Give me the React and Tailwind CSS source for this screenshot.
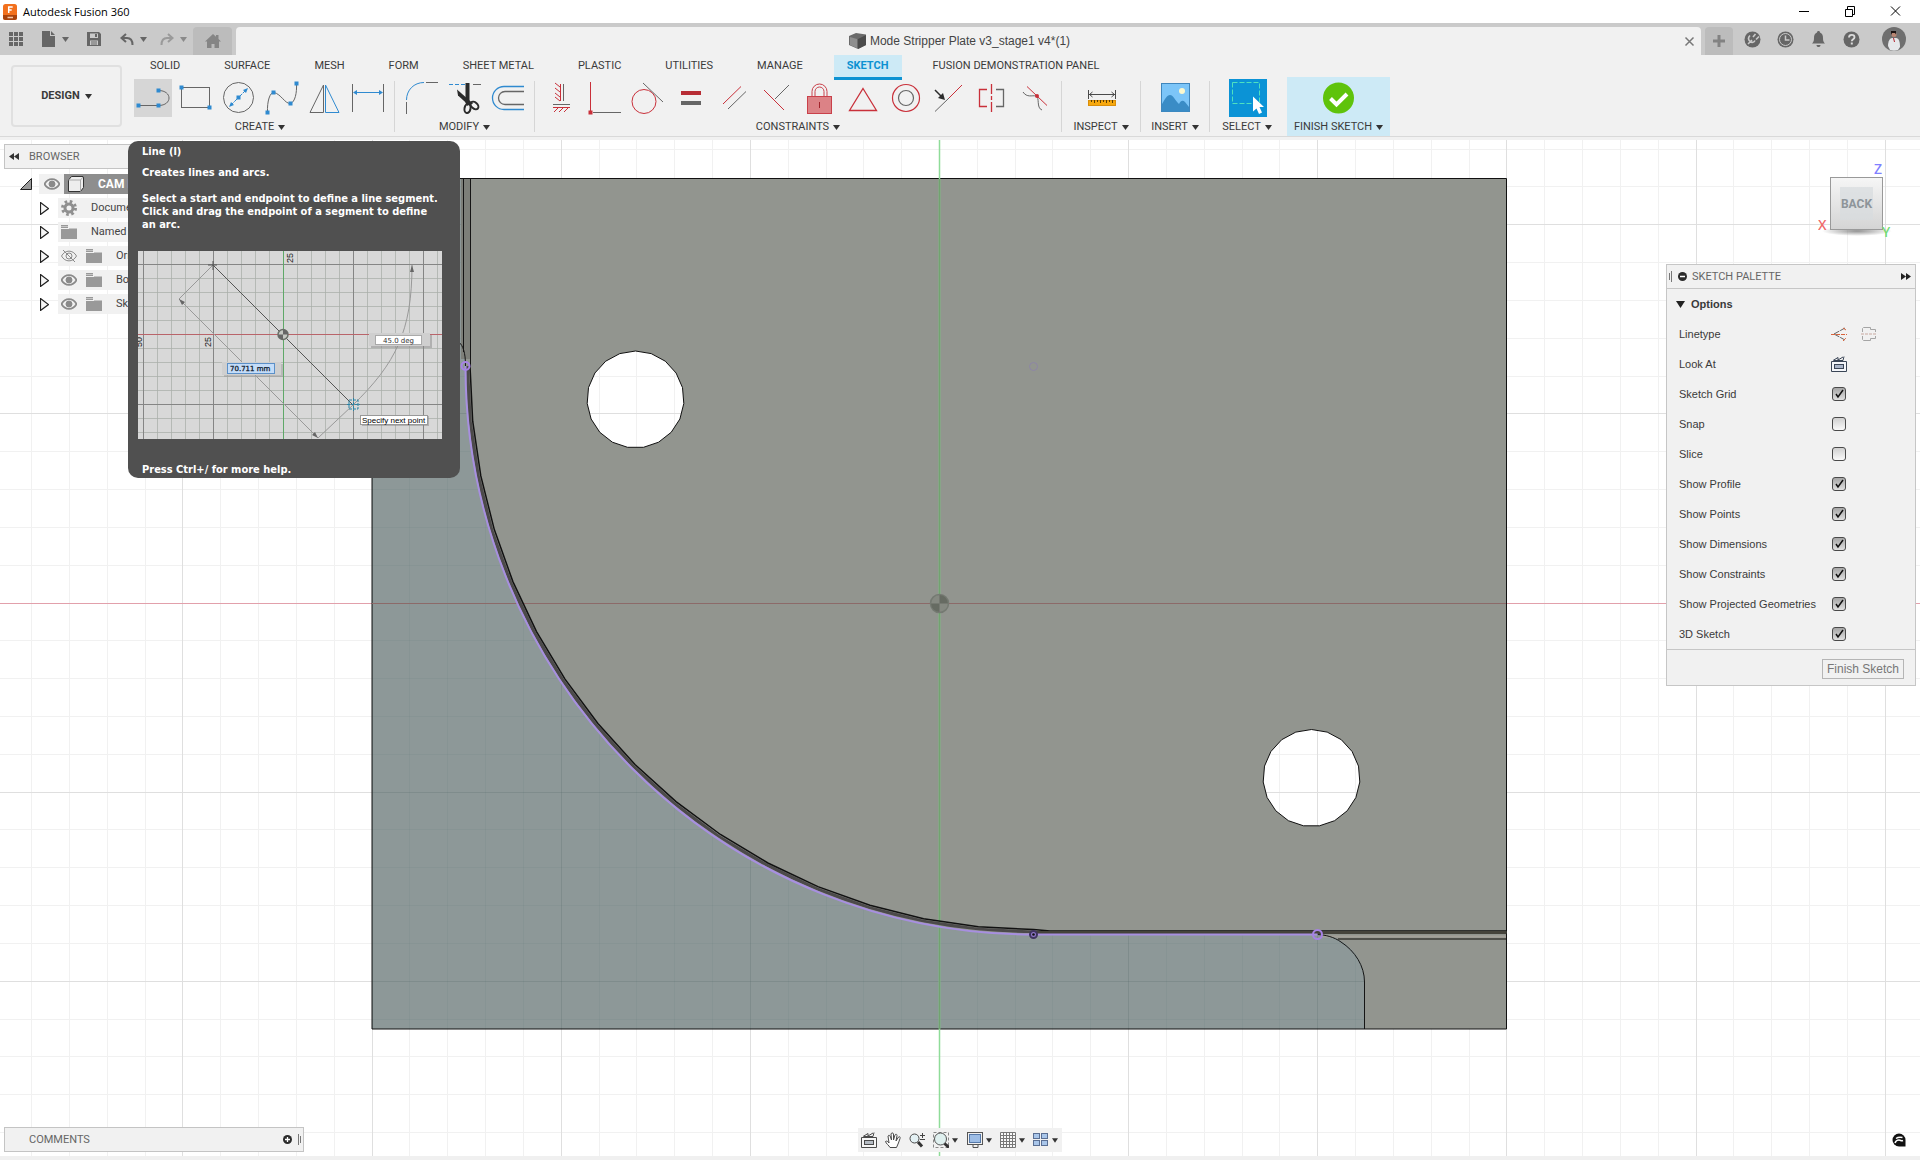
const BLUE = "#2f8ad0";
const GRAY = "#666666";
const RED = "#c9303a";
const STEP = 37.83;
const OX = 939;
const OY = 603.5;

function Caret({ className = "text-[#333]" }) {
  return (
    <svg width="7" height="5" viewBox="0 0 7 5" className={className} aria-hidden="true">
      <path d="M0 0h7L3.5 5z" fill="currentColor" />
    </svg>
  );
}

function Node({ x, y, c = BLUE }) {
  return <rect x={x - 2} y={y - 2} width="4" height="4" fill={c} />;
}

const createTools = [
  {
    name: "Line",
    active: true,
    art: (
      <g>
        <path d="M7.5 26.5H27.5C41.5 26.5 41.5 11.5 27.5 11.5" stroke={GRAY} />
        <Node x={7.5} y={26.5} /><Node x={27.5} y={26.5} /><Node x={27.5} y={11.5} />
      </g>
    ),
  },
  {
    name: "Rectangle",
    art: (
      <g>
        <rect x="7.5" y="8.5" width="28" height="20" stroke={GRAY} />
        <Node x={7.5} y={8.5} /><Node x={35.5} y={28.5} />
      </g>
    ),
  },
  {
    name: "Circle",
    art: (
      <g>
        <circle cx="21.5" cy="18.5" r="15" stroke={GRAY} />
        <path d="M13 27 30 10" stroke={BLUE} strokeDasharray="5 1" />
        <path d="M31 9l-5 2 3 3zM12 28l5-2-3-3z" fill={BLUE} />
        <Node x={21.5} y={18.5} />
      </g>
    ),
  },
  {
    name: "Spline",
    art: (
      <g>
        <path d="M7.5 33.5C7 22 10 13 14 13.5 21 15 25 25 30.5 24.5 35 23 37 14 36.5 4.5" stroke={GRAY} />
        <Node x={7.5} y={33.5} /><Node x={13.5} y={13.5} /><Node x={30.5} y={24.5} /><Node x={36.5} y={4.5} />
      </g>
    ),
  },
  {
    name: "Mirror",
    art: (
      <g>
        <path d="M20.5 6v27.5H7z" stroke={GRAY} />
        <path d="M22.5 6v27.5H36z" stroke={BLUE} />
      </g>
    ),
  },
  {
    name: "Dimension",
    art: (
      <g>
        <path d="M6.5 5v28M37.5 5v28" stroke={GRAY} />
        <path d="M8 13.5h28" stroke={BLUE} />
        <path d="M7 13.5l4-2.5v5zM37 13.5l-4-2.5v5z" fill={BLUE} />
      </g>
    ),
  },
];

const modifyTools = [
  {
    name: "Fillet",
    art: (
      <g>
        <path d="M6.5 21C6.5 11 14 3.5 24 3.5" stroke={BLUE} />
        <path d="M26 3.5H38M6.5 23V35" stroke={GRAY} />
      </g>
    ),
  },
  {
    name: "Trim",
    art: (
      <g>
        <path d="M6 5.5h16" stroke={BLUE} strokeDasharray="4 2" />
        <path d="M30 5.5h8" stroke={GRAY} />
        <path d="M22.5 4h4v20l-2 3-2-3z" fill="#2b2b2b" />
        <path d="M14 10.5l16 14-4 2-11-10z" fill="#2b2b2b" />
        <ellipse cx="24.5" cy="29.5" rx="3" ry="4.5" stroke="#2b2b2b" strokeWidth="2" transform="rotate(10 24.5 29.5)" />
        <ellipse cx="31.5" cy="26.5" rx="3" ry="4.5" stroke="#2b2b2b" strokeWidth="2" transform="rotate(-48 31.5 26.5)" />
      </g>
    ),
  },
  {
    name: "Offset",
    art: (
      <g>
        <path d="M38 7.5H18a11.5 11.5 0 0 0 0 23H38" stroke={BLUE} strokeWidth="1.3" />
        <path d="M38 12.5H19a6.5 6.5 0 0 0 0 13H38" stroke={GRAY} strokeWidth="1.3" />
      </g>
    ),
  },
];

const constraintTools = [
  {
    name: "Horizontal/Vertical",
    art: (
      <g>
        <path d="M20.5 5v17M13 28.5h17M20 8l-5-4M20 13l-5-4M20 18l-5-4M20 22l-5-4M14 33l4-4M19 33l4-4M24 33l4-4" stroke={RED} />
        <path d="M23.5 5v17M13 25.5h17" stroke={GRAY} />
      </g>
    ),
  },
  {
    name: "Coincident",
    art: (
      <g>
        <path d="M7.5 3v30" stroke={RED} />
        <path d="M10 33.5h28" stroke={GRAY} />
        <Node x={7.5} y={33.5} c={RED} />
      </g>
    ),
  },
  {
    name: "Tangent",
    art: (
      <g>
        <circle cx="18" cy="22.5" r="12" stroke={RED} />
        <path d="M17 4 37 23" stroke={GRAY} />
      </g>
    ),
  },
  {
    name: "Equal",
    art: (
      <g>
        <rect x="12" y="12" width="20" height="4" fill="#b82d35" />
        <rect x="12" y="22" width="20" height="4" fill={GRAY} />
      </g>
    ),
  },
  {
    name: "Parallel",
    art: (
      <g>
        <path d="M11 25 29 7.5" stroke={RED} />
        <path d="M16 30 34 12.5" stroke={GRAY} />
      </g>
    ),
  },
  {
    name: "Perpendicular",
    art: (
      <g>
        <path d="M9 11 29 31" stroke={RED} />
        <path d="M20 20 34 6" stroke={GRAY} />
      </g>
    ),
  },
  {
    name: "Fix/Unfix",
    art: (
      <g>
        <path d="M14 17v-4.5a7.5 7.5 0 0 1 15 0V17M17 17v-4.5a4.5 4.5 0 0 1 9 0V17" stroke="#c9404a" />
        <rect x="9.5" y="17.5" width="24" height="17" fill="#dc8286" stroke="#c9404a" />
        <path d="M21.5 23v6" stroke="#a3242c" />
      </g>
    ),
  },
  { name: "Polygon", art: <path d="M22 9.5 35.5 31.5h-27z" stroke={RED} strokeWidth="1.3" /> },
  {
    name: "Concentric",
    art: (
      <g>
        <circle cx="22" cy="19" r="13.5" stroke={RED} strokeWidth="1.2" />
        <circle cx="22" cy="19" r="7.5" stroke={GRAY} strokeWidth="1.2" />
      </g>
    ),
  },
  {
    name: "Midpoint",
    art: (
      <g>
        <path d="M8 32.5 22 19" stroke={GRAY} />
        <path d="M22 19 35 6" stroke={RED} />
        <path d="M8 11l7 7" stroke="#2b2b2b" strokeWidth="1.5" />
        <path d="M18 21l-7-2 5-5z" fill="#2b2b2b" />
      </g>
    ),
  },
  {
    name: "Symmetry",
    art: (
      <g>
        <path d="M17 10.5H9.5v17H17" stroke={RED} strokeWidth="1.3" />
        <path d="M21.5 5v28" stroke={RED} strokeWidth="1.3" strokeDasharray="10 2 4 2" />
        <path d="M26 10.5h7.5v17H26" stroke={GRAY} strokeWidth="1.3" />
      </g>
    ),
  },
  {
    name: "Curvature",
    art: (
      <g>
        <path d="M10 13c4 6 9 3 13 4s0 12 6 14" stroke={GRAY} />
        <path d="M14 7.5 34 26.5" stroke={RED} />
        <circle cx="24" cy="17" r="2" fill={RED} />
      </g>
    ),
  },
];

const inspectTools = [
  {
    name: "Measure",
    art: (
      <g>
        <path d="M8.5 11v9M35.5 11v9M9 15.5h26M12.5 13l-3 2.5 3 2.5M31.5 13l3 2.5-3 2.5" stroke="#4a4a4a" />
        <rect x="8.5" y="21.5" width="27" height="5" fill="#f7a80d" stroke="#d98e0a" />
        <path d="M11.5 21v2M14.5 21v3M17.5 21v2M20.5 21v3M23.5 21v2M26.5 21v3M29.5 21v2M32.5 21v3" stroke="#5a3c00" />
      </g>
    ),
  },
];

const insertTools = [
  {
    name: "Insert image",
    art: (
      <g>
        <rect x="7.5" y="4.5" width="28" height="28" fill="#7cc5f8" stroke="#3f86bd" />
        <path d="M8 25c3-5 5-9 8-9s5 5 9 9c2-4 4-4 6-2l4 5v4.5H8z" fill="#3a8cc6" />
        <circle cx="28" cy="12" r="3" fill="#fbf8cf" />
      </g>
    ),
  },
];

const selectTools = [
  {
    name: "Select",
    art: (
      <g>
        <rect x="3" y="0" width="38" height="38" fill="#0b93d6" />
        <rect x="6.5" y="3.5" width="27" height="21" stroke="#4fe0c0" strokeDasharray="5 2" />
        <path d="M27 17.5v15l3.5-3 2.5 5.5 3-1.5-2.5-5.5H38z" fill="#fff" />
      </g>
    ),
  },
];

const finishTools = [
  {
    name: "Finish",
    art: (
      <g>
        <circle cx="21.5" cy="19" r="15.5" fill="#5fc30b" />
        <path d="M13.5 19.5l6 6 10.5-10.5" stroke="#fff" strokeWidth="4" />
      </g>
    ),
  },
];

function ToolGroup({ label, tools, className = "" }) {
  return (
    <section aria-label={label} className={`flex flex-col items-center pt-[2px] ${className}`}>
      <div className="flex">
        {tools.map((t) => (
          <button key={t.name} type="button" aria-label={t.name} className="w-[43px] shrink-0">
            <svg width="43" height="38" viewBox="0 0 43 38" fill="none" className="block">
              {t.active && <rect x="3" width="38" height="38" fill="#d6d6d6" />}
              {t.art}
            </svg>
          </button>
        ))}
      </div>
      <button type="button" className="mt-[2px] flex h-4 items-center gap-1 text-[11px] leading-4 whitespace-nowrap">
        {label} <Caret />
      </button>
    </section>
  );
}

function Divider() {
  return (
    <div className="flex w-[11px] shrink-0 justify-center pt-1">
      <div className="h-[51px] w-px bg-[#d6d6d6]" />
    </div>
  );
}

const tabs = ["SOLID", "SURFACE", "MESH", "FORM", "SHEET METAL", "PLASTIC", "UTILITIES", "MANAGE", "SKETCH", "FUSION DEMONSTRATION PANEL"];

function TitleBar() {
  return (
    <div className="flex h-[23px] items-center bg-white pl-[3px]">
      <svg width="14" height="16" viewBox="0 0 14 16" aria-hidden="true">
        <rect width="14" height="16" rx="2.5" fill="#f2701d" />
        <path d="M0 11h14v2.5a2.5 2.5 0 0 1-2.5 2.5h-9A2.5 2.5 0 0 1 0 13.5z" fill="#a8420c" />
        <path d="M5.7 9V3h4M5.7 6h3" stroke="#fff" strokeWidth="1.5" fill="none" />
        <path d="M4.5 13.5h5.500" stroke="#f3c7a8" strokeWidth="1.5" />
      </svg>
      <h1 className="ml-[6px] font-['Open_Sans','Noto_Sans',sans-serif] text-[11px] leading-4 text-black">Autodesk Fusion 360</h1>
      <div className="ml-auto flex pr-px text-black">
        {[
          ["Minimize", "M18 10.5h10"],
          ["Restore", "M18.5 8.5h7v7h-7zM20.5 8.5v-3h7v8h-2"],
          ["Close", "M18 5.5l9 9M27 5.5l-9 9"],
        ].map(([n, d]) => (
          <button key={n} type="button" aria-label={n}>
            <svg width="46" height="21" viewBox="0 0 46 21" fill="none" stroke="currentColor">
              <path d={d} />
            </svg>
          </button>
        ))}
      </div>
    </div>
  );
}

const statusIcons = [
  ["Extensions", <g key="e"><circle cx="8.5" cy="8.5" r="8" fill="#666" /><path d="M4 13l4-4M6 4.500c-2 2-2 4 0 6 2 1.500 4 1 5-1M9 6l2.5-3M12 8.500l3-3" stroke="#cacaca" strokeWidth="1.6" fill="none" /></g>],
  ["Job status", <g key="j"><circle cx="8.5" cy="8.5" r="8" fill="#666" /><circle cx="8.5" cy="8.5" r="6" fill="none" stroke="#cacaca" /><path d="M8.5 4.5v4.5h4" stroke="#cacaca" strokeWidth="1.5" fill="none" /></g>],
  ["Notifications", <path key="n" d="M8.5 0c1 0 1.5.6 1.5 1.5 2.500 1 3 3 3 5.500 0 3 .500 4 2 5.500H2C3.500 11 4 10 4 7c0-2.500.500-4.500 3-5.500C7 .600 7.500 0 8.500 0zM6.500 14h4c0 1.500-1 2-2 2s-2-.500-2-2z" fill="#666" />],
  ["Help", <g key="h"><circle cx="8.5" cy="8.5" r="8" fill="#666" /><path d="M6 6.5c0-3.500 5.500-3.300 5.500-.2 0 2-2.700 2-2.700 4" stroke="#dcdcdc" strokeWidth="1.8" fill="none" /><rect x="7.8" y="11.5" width="2" height="2" fill="#dcdcdc" /></g>],
];

function TabBar() {
  return (
    <div className="flex h-8 items-end bg-[#cacaca] pr-[14px] text-[#666]">
      <div className="flex h-8 w-[193px] shrink-0 items-center pl-[9px]">
        <button type="button" aria-label="Data panel">
          <svg width="14" height="14" viewBox="0 0 14 14" fill="currentColor">
            <path d="M0 0h4v4H0zM5 0h4v4H5zM10 0h4v4h-4zM0 5h4v4H0zM5 5h4v4H5zM10 5h4v4h-4zM0 10h4v4H0zM5 10h4v4H5zM10 10h4v4h-4z" />
          </svg>
        </button>
        <button type="button" aria-label="File" className="ml-[19px] flex items-center gap-[7px]">
          <svg width="13" height="16" viewBox="0 0 13 16" fill="currentColor">
            <path d="M0 0h8v5h5v11H0zM9 0l4 4H9z" />
          </svg>
          <Caret className="text-[#666]" />
        </button>
        <button type="button" aria-label="Save" className="ml-[18px]">
          <svg width="14" height="14" viewBox="0 0 14 14" fill="currentColor">
            <path fillRule="evenodd" d="M0 0h12l2 2v12H0zM3 1.5v4.500h8V1.500zM3 8.500V13h8V8.500zM4 9.500h6v1H4zM4 11.500h6v1H4zM8 2h2v3H8z" />
          </svg>
        </button>
        <button type="button" aria-label="Undo" className="ml-[19px] flex items-center gap-[6px]">
          <svg width="14" height="13" viewBox="0 0 14 13" fill="none" stroke="currentColor" strokeWidth="2">
            <path d="M6 1 1.5 5 6 9M2 5h5c4 0 5.500 3 5.500 7" />
          </svg>
          <Caret className="text-[#666]" />
        </button>
        <button type="button" aria-label="Redo" className="ml-[13px] flex items-center gap-[6px] text-[#9a9a9a]">
          <svg width="14" height="13" viewBox="0 0 14 13" fill="none" stroke="currentColor" strokeWidth="2">
            <path d="M8 1l4.500 4L8 9M12 5H7c-4 0-5.500 3-5.500 7" />
          </svg>
          <Caret className="text-[#8a8a8a]" />
        </button>
      </div>
      <button type="button" aria-label="Home" className="flex h-7 w-[39px] shrink-0 items-center justify-center rounded-t bg-[#bcbcbc] text-[#858585]">
        <svg width="16" height="14" viewBox="0 0 16 14" fill="currentColor">
          <path d="M8 0l3 2.800V1h2.500v4L16 7.500h-2V14H9.500v-4h-3v4H2V7.500H0z" />
        </svg>
      </button>
      <div className="ml-1 flex h-7 min-w-0 flex-1 items-center rounded-t bg-[#f1f1f1] pr-[5px] text-[#444]">
        <div className="flex min-w-0 flex-1 items-center justify-center gap-1 text-[12px] leading-4">
          <svg width="17" height="16" viewBox="0 0 17 16" aria-hidden="true">
            <path d="M0 3l7-3 10 1.500V12l-8 4-9-4z" fill="#6b6b6b" />
            <path d="M1 4l7 2v9l-7-3z" fill="#8f8f8f" />
            <path d="M9 6l8-4v10l-8 4z" fill="#4b4b4b" />
          </svg>
          <span className="truncate">Mode Stripper Plate v3_stage1 v4*(1)</span>
        </div>
        <button type="button" aria-label="Close document">
          <svg width="13" height="13" viewBox="0 0 13 13" stroke="#777" strokeWidth="1.5">
            <path d="M2.500 2.500l8 8M10.500 2.500l-8 8" />
          </svg>
        </button>
      </div>
      <button type="button" aria-label="New document" className="ml-1 flex h-7 w-7 shrink-0 items-center justify-center rounded-t bg-[#bcbcbc]">
        <svg width="14" height="14" viewBox="0 0 14 14" stroke="#828282" strokeWidth="3">
          <path d="M7 1v12M1 7h12" />
        </svg>
      </button>
      <div className="flex h-8 shrink-0 items-center pl-[3px]">
        {statusIcons.map(([n, art]) => (
          <button key={n} type="button" aria-label={n} className="flex w-[33px] justify-center">
            <svg width="17" height="17" viewBox="0 0 17 17">{art}</svg>
          </button>
        ))}
        <button type="button" aria-label="Account" className="ml-[14px]">
          <svg width="24" height="24" viewBox="0 0 24 24">
            <circle cx="12" cy="12" r="12" fill="#6f6f6f" />
            <path d="M6 19c0-5 2-8 4-8h4c3 0 4 4 4 9l-2 3c-3 1-5 1-8 0z" fill="#e6e8ea" />
            <circle cx="12" cy="7.500" r="2.500" fill="#b98672" />
            <path d="M9 8V4h5v3.500L13 6h-3z" fill="#1d1413" />
            <path d="M11.500 11l1 4" stroke="#b3202a" />
          </svg>
        </button>
      </div>
    </div>
  );
}

function Ribbon() {
  return (
    <div className="flex h-[85px] bg-[#f1f1f1] pl-[11px] font-['Roboto',sans-serif] text-[#3a3a3a]">
      <button type="button" className="mt-[10px] mr-[9px] flex h-[62px] w-[111px] shrink-0 items-center justify-center gap-[5px] rounded border-2 border-[#e0e0e0] text-[11px] leading-4 font-bold">
        DESIGN <Caret />
      </button>
      <div className="min-w-0 flex-1">
        <nav className="flex h-[25px] gap-[18px] overflow-hidden pl-[6px]">
          {tabs.map((t) => (
            <button
              key={t}
              type="button"
              className={
                t === "SKETCH"
                  ? "border-b-[3px] border-[#0d92d2] bg-[#cdeaf6] px-[13px] text-[11px] leading-[22px] font-bold whitespace-nowrap text-[#0d92d2]"
                  : "border-b-[3px] border-transparent px-[13px] text-[11px] leading-[22px] whitespace-nowrap"
              }
            >
              {t}
            </button>
          ))}
        </nav>
        <div className="-mt-[3px] flex h-[59px]">
          <ToolGroup label="CREATE" tools={createTools} />
          <Divider />
          <ToolGroup label="MODIFY" tools={modifyTools} />
          <Divider />
          <ToolGroup label="CONSTRAINTS" tools={constraintTools} />
          <Divider />
          <ToolGroup label="INSPECT" tools={inspectTools} className="w-[68px]" />
          <Divider />
          <ToolGroup label="INSERT" tools={insertTools} className="w-[58px]" />
          <Divider />
          <ToolGroup label="SELECT" tools={selectTools} className="w-16" />
          <ToolGroup label="FINISH SKETCH" tools={finishTools} className="ml-2 w-[103px] bg-[#cdeaf6]" />
        </div>
        <div className="-ml-[131px] h-px bg-[#d9d9d9]" />
      </div>
    </div>
  );
}

function polygon(cx, cy, r, n) {
  let d = "";
  for (let i = 0; i < n; i++) {
    const a = -Math.PI / 2 + (i * 2 * Math.PI) / n;
    d += `${i ? "L" : "M"}${(cx + r * Math.cos(a)).toFixed(1)} ${(cy + r * Math.sin(a)).toFixed(1)}`;
  }
  return d + "Z";
}

function edgePoints(r, n) {
  let d = "";
  for (let i = 0; i <= n; i++) {
    const a = Math.PI - (i * Math.PI) / 2 / n;
    d += `L${(1033.5 + r * Math.cos(a)).toFixed(1)} ${(366 + r * Math.sin(a)).toFixed(1)}`;
  }
  return d;
}

function gridLines(major) {
  let d = "";
  for (let i = -26; i <= 26; i++) {
    if ((i % 5 === 0) !== major) continue;
    const x = Math.round(OX + i * STEP) + 0.5;
    const y = Math.round(OY + i * STEP) - 0.5;
    d += `M${x} 0V1200M0 ${y}H1920`;
  }
  return d;
}

const hole1 = polygon(635.5, 399.5, 48.5, 19);
const hole2 = polygon(1311.5, 778, 48.5, 19);
const pocket = "M372 178.5H465.5V366A568 568 0 0 0 1033.5 934.5H1317.5A47.5 47.5 0 0 1 1364.5 982V1029H372Z";
const bandReturn = edgePoints(564.5, 16).split("L").filter(Boolean).reverse().map((p) => "L" + p).join("");

function ModelCanvas() {
  return (
    <svg className="absolute inset-0 h-full w-full" viewBox="0 140 1920 1016" preserveAspectRatio="xMidYMid slice" fill="none" role="img" aria-label="Sketch canvas">
      <defs>
        <clipPath id="pocket"><path d={pocket} /></clipPath>
      </defs>
      <path d={gridLines(false)} stroke="#f1f1f1" />
      <path d={gridLines(true)} stroke="#dfdfdf" />
      <path d="M0 603.5H1920" stroke="#e2a0ab" />
      <path d={`M372 178.5H1506.5V1029H372Z${hole1}${hole2}`} fill="#92958f" fillRule="evenodd" />
      <path d={pocket} fill="#8d9898" />
      <g clipPath="url(#pocket)" stroke="#4f6464">
        <path d={gridLines(false)} strokeOpacity=".08" />
        <path d={gridLines(true)} strokeOpacity=".22" />
      </g>
      <path d={`${hole1}${hole2}M372 178.5H1506.5V1029H372Z`} stroke="#111" />
      <path d="M372 603.5H1506" stroke="#8c6a69" />
      <path d="M939.5 140V1156" stroke="#8fdc99" strokeWidth="1.5" />
      <path d="M939.5 179V1029" stroke="#71a36f" strokeWidth="1.5" />
      <rect x="461" y="179" width="9.5" height="180" fill="#7d7f79" />
      <path d="M465.5 366C465.5 352 463 346 459 342M463.5 179V352M470.5 179V366" stroke="#151515" />
      <path d={`M466 366A567 567 0 0 0 1033.5 933H1506.5V931H1033.5${bandReturn}Z`} fill="#4c4a4a" />
      <path d={`M470.5 366${edgePoints(563.5, 16)}L1050 931H1506.5`} stroke="#111" strokeWidth="1.5" />
      <path d="M1033.5 932.5H1506.5" stroke="#45433b" strokeWidth="3" />
      <path d="M1322 936.5H1506" stroke="#a3a098" strokeWidth="2" />
      <path d="M1338 939H1506" stroke="#3a3a35" strokeWidth="1.5" />
      <path d="M1317.5 934.5C1326 935 1334 937 1341 942 1355 951 1364.5 966 1364.5 982V1029" stroke="#151515" />
      <path d="M465.5 366A568 568 0 0 0 1033.5 934.5H1317.5" stroke="#a78fe0" strokeWidth="2" />
      <g strokeWidth="2">
        <circle cx="465.5" cy="366" r="4" stroke="#a782e6" />
        <circle cx="1317.5" cy="934.5" r="4.5" stroke="#a782e6" />
        <circle cx="1033.5" cy="934.5" r="3.5" stroke="#3f3360" fill="#8f78c8" />
      </g>
      <circle cx="1033.5" cy="934.5" r="1.3" fill="#111" />
      <circle cx="1033.5" cy="366.5" r="4" stroke="#8d86a6" />
      <circle cx="939.5" cy="603.5" r="9" fill="#858981" stroke="#757a72" strokeWidth="1.5" />
      <path d="M939.5 603.5V595a8.5 8.5 0 0 1 8.5 8.5zM939.5 603.5V612a8.5 8.5 0 0 1-8.5-8.5z" fill="#666b62" />
    </svg>
  );
}

function Eye({ hidden }) {
  return (
    <svg width="16" height="12" viewBox="0 0 16 12" fill="none" aria-hidden="true">
      <path d="M.5 6C4-.5 12-.5 15.5 6 12 12.5 4 12.5.5 6z" stroke="#8a8a8a" strokeWidth={hidden ? 1 : 1.8} />
      <circle cx="8" cy="6" r="3" fill={hidden ? "none" : "#8a8a8a"} stroke="#8a8a8a" />
      {hidden && <path d="M2 0l12 12" stroke="#8a8a8a" />}
    </svg>
  );
}

function Folder() {
  return (
    <svg width="16" height="14" viewBox="0 0 16 14" aria-hidden="true">
      <path d="M0 1.5h7v2h9V14H0zM0 0h7v1H0z" fill="#999" />
      <path d="M0 3.5h8" stroke="#f1f1f1" />
    </svg>
  );
}

function Gear() {
  return (
    <svg width="16" height="16" viewBox="0 0 16 16" fill="none" aria-hidden="true">
      <circle cx="8" cy="8" r="4" stroke="#8f8f8f" strokeWidth="3" />
      <circle cx="8" cy="8" r="6.5" stroke="#8f8f8f" strokeWidth="3" strokeDasharray="2.55 2.55" />
    </svg>
  );
}

const treeRows = [
  { label: "Document Settings", icons: [<Gear key="g" />] },
  { label: "Named Views", icons: [<Folder key="f" />] },
  { label: "Origin", icons: [<Eye key="e" hidden />, <Folder key="f" />] },
  { label: "Bodies", icons: [<Eye key="e" />, <Folder key="f" />] },
  { label: "Sketches", icons: [<Eye key="e" />, <Folder key="f" />] },
];

function Browser() {
  return (
    <aside className="relative ml-1 w-[300px] pt-1 font-['Roboto',sans-serif] text-[11px] leading-4 text-[#444]">
      <div className="flex h-[25px] items-center gap-[10px] border border-[#c4c4c4] bg-[#f1f1f1] pl-1 text-[#666]">
        <button type="button" aria-label="Collapse browser">
          <svg width="10" height="7" viewBox="0 0 10 7" fill="#333"><path d="M5 0v7L0 3.5zM10 0v7L5 3.5z" /></svg>
        </button>
        <h2>BROWSER</h2>
      </div>
      <ul className="mt-[5px] flex flex-col gap-1">
        <li className="flex h-5 items-center pl-4">
          <button type="button" aria-label="Collapse CAM" className="mr-[7px]">
            <svg width="12" height="12" viewBox="0 0 12 12"><path d="M11.5.5v11H.5z" fill="#9a9a9a" stroke="#222" /></svg>
          </button>
          <span className="flex h-5 w-[25px] items-center justify-center bg-[#f1f1f1]"><Eye /></span>
          <span className="flex h-5 items-center gap-[14px] bg-[#8e8e8e] pr-2 pl-1 text-[12px] font-bold text-white">
            <svg width="16" height="16" viewBox="0 0 16 16" fill="#eee" stroke="#333"><path d="M.5 4l3-3.500h12v11l-3 4H.5z" /><path d="M.5 4h12v11.500M12.5 4l3-3.500" fill="none" stroke="#aaa" /></svg>
            CAM Mode
          </span>
        </li>
        {treeRows.map((r) => (
          <li key={r.label} className="flex h-5 items-center pl-9">
            <button type="button" aria-label={`Expand ${r.label}`} className="mr-[9px]">
              <svg width="9" height="13" viewBox="0 0 9 13"><path d="M.5.5l8 6-8 6z" fill="#f7f7f7" stroke="#222" strokeWidth="1.2" /></svg>
            </button>
            <span className="flex h-5 items-center gap-[9px] bg-[#f1f1f1] pr-1 pl-[3px] whitespace-nowrap">
              {r.icons}
              <span className="pl-[5px]">{r.label}</span>
            </span>
          </li>
        ))}
      </ul>
    </aside>
  );
}

function previewGrid(major) {
  let d = "";
  for (let i = -11; i <= 12; i++) {
    if ((i % 5 === 0) !== major) continue;
    const x = Math.round(145 + i * 14) + 0.5;
    d += `M${x} 0V188M0 ${Math.round(83 + i * 14) + 0.5}H304`;
  }
  return d;
}

function LineTooltip() {
  return (
    <div role="tooltip" className="absolute top-px left-32 w-[332px] rounded-[10px] bg-[#505050] pt-1 pr-[18px] pb-[2px] pl-[10px] font-['DejaVu_Sans_Condensed','Noto_Sans',sans-serif] text-[11px] leading-[13px] font-bold text-white">
      <div className="px-1 whitespace-nowrap">
        <p>Line (l)</p>
        <p className="mt-2">Creates lines and arcs.</p>
        <p className="mt-[13px]">
          Select a start and endpoint to define a line segment.<br />
          Click and drag the endpoint of a segment to define<br />
          an arc.
        </p>
      </div>
      <svg className="mt-5 block w-full" viewBox="0 0 304 188" fill="none" role="img" aria-label="Line preview">
        <rect width="304" height="188" fill="#d8d8d8" />
        <path d={previewGrid(false)} stroke="#a9afa9" strokeOpacity=".75" />
        <path d={previewGrid(true)} stroke="#858585" />
        <path d="M0 83.5H304" stroke="#b9646a" />
        <path d="M145.5 0V188" stroke="#5fa868" />
        <path d="M75 14 215 154" stroke="#555" />
        <path d="M75 14 41 48 180 187 215 154M274 14C274 80 258 112 215 154" stroke="#999" />
        <path d="M41 48l6 3-3 3zM180 187l-6-3 3-3zM274 14l-2 7h4z" fill="#666" />
        <path d="M70 14h9M75 10v9" stroke="#555" />
        <circle cx="145" cy="83.5" r="5" stroke="#6a6f68" strokeWidth="1.5" fill="#c5c8c3" />
        <path d="M145 83.5v-5a5 5 0 0 1 5 5zM145 83.5v5a5 5 0 0 1-5-5z" fill="#666" />
        <path d="M209 153.5h13M215.5 147v13M211 149h9v9h-9z" stroke="#2b83a5" strokeDasharray="3 1" />
        <g fontFamily="Liberation Sans" fontSize="9" fill="#222" fontWeight="400">
          <text transform="translate(155 12) rotate(-90)">25</text>
          <text transform="translate(73 96) rotate(-90)">25</text>
          <text transform="translate(4 96) rotate(-90)">50</text>
        </g>
        <rect x="86" y="113" width="59" height="13" fill="#999" opacity=".5" />
        <rect x="84" y="111" width="59" height="13" fill="#cfcfcf" />
        <rect x="89.5" y="112.5" width="47" height="10" fill="#c4dcf8" stroke="#5b90c8" />
        <rect x="233" y="84" width="61" height="13" fill="#888" opacity=".5" />
        <rect x="231" y="82" width="61" height="13" fill="#cfcfcf" />
        <rect x="237.5" y="84.5" width="46" height="9" fill="#fff" stroke="#aaa" />
        <rect x="224" y="165" width="67" height="10" fill="#888" opacity=".5" />
        <rect x="222.5" y="164.5" width="67" height="9" fill="#fff" stroke="#999" />
        <g fontFamily="DejaVu Sans" fontSize="7" fontWeight="400">
          <text x="92" y="120" fill="#123" stroke="#123" strokeWidth=".3">70.711 mm</text>
          <text x="245" y="92" fill="#333">45.0 deg</text>
        </g>
        <text x="224" y="172" fontFamily="Liberation Sans" fontSize="8" fontWeight="400" fill="#000">Specify next point</text>
      </svg>
      <p className="mt-6 px-1">Press Ctrl+/ for more help.</p>
    </div>
  );
}

function LookAtIcon() {
  return (
    <svg width="16" height="16" viewBox="0 0 16 16" fill="none" aria-hidden="true">
      <path d="M.5 5.5h15v10H.5z" fill="#f4f6fa" stroke="#3a4556" />
      <rect x="3.5" y="8.5" width="9" height="4" fill="#a9b4c8" stroke="#3a4556" />
      <path d="M2 4.5l5-3v2.500l5-3M3 4.5h9l1-4" stroke="#3a4556" />
    </svg>
  );
}

const options = [
  ["Sketch Grid", true],
  ["Snap", false],
  ["Slice", false],
  ["Show Profile", true],
  ["Show Points", true],
  ["Show Dimensions", true],
  ["Show Constraints", true],
  ["Show Projected Geometries", true],
  ["3D Sketch", true],
];

function SketchPalette() {
  return (
    <aside className="absolute top-[124px] right-1 w-[250px] border border-[#c6c6c6] bg-[#f1f1f1] text-[11px] leading-4 text-[#3a3a3a]">
      <div className="flex h-6 items-center border-b border-[#c6c6c6] pr-1 pl-[2px] font-['Roboto',sans-serif] text-[#666]">
        <svg width="3" height="11" viewBox="0 0 3 11" stroke="#777" aria-hidden="true"><path d="M.5 2v7M2.5 0v11" /></svg>
        <button type="button" aria-label="Minimize palette" className="mr-[5px] ml-[6px]">
          <svg width="9" height="9" viewBox="0 0 9 9"><circle cx="4.5" cy="4.5" r="4.5" fill="#2b2b2b" /><path d="M2 4.5h5" stroke="#fff" strokeWidth="1.5" /></svg>
        </button>
        <h2>SKETCH PALETTE</h2>
        <button type="button" aria-label="Dock palette" className="ml-auto">
          <svg width="10" height="7" viewBox="0 0 10 7" fill="#222"><path d="M0 0v7l5-3.500zM5 0v7l5-3.500z" /></svg>
        </button>
      </div>
      <button type="button" className="mt-[7px] flex items-center gap-[6px] pl-[9px] font-bold">
        <svg width="9" height="7" viewBox="0 0 9 7" fill="#222"><path d="M0 0h9L4.5 7z" /></svg>
        Options
      </button>
      <div className="flex flex-col pt-[7px]">
        <div className="grid h-[30px] grid-cols-[152px_1fr] items-center pl-3">
          <span>Linetype</span>
          <span className="flex gap-[14px]">
            <button type="button" aria-label="Construction">
              <svg width="16" height="16" viewBox="0 0 16 16" fill="none">
                <path d="M3 8l11-6M3 8l11 6" stroke="#666" strokeDasharray="6 1" />
                <path d="M0 8.5h16M12 2l3 2M12 15l3-3" stroke="#d9643c" strokeDasharray="4 1" />
              </svg>
            </button>
            <button type="button" aria-label="Centerline">
              <svg width="16" height="16" viewBox="0 0 16 16" fill="none" stroke="#a5a5a5">
                <path d="M1.5 6V2.500l1-1h7v2h5V6M1.500 10v3.500l1 1h7v-2h5V10" />
                <path d="M0 8h16" stroke="#c9a9a0" strokeDasharray="3 1" />
              </svg>
            </button>
          </span>
        </div>
        <div className="grid h-[30px] grid-cols-[152px_1fr] items-center pl-3">
          <span>Look At</span>
          <button type="button" aria-label="Look At" className="w-4"><LookAtIcon /></button>
        </div>
        {options.map(([name, on]) => (
          <label key={name} className="grid h-[30px] grid-cols-[153px_1fr] items-center pl-3">
            {name}
            <span className="grid size-[14px]">
              <input
                type="checkbox"
                defaultChecked={on}
                className="col-start-1 row-start-1 size-[14px] peer appearance-none rounded-[3px] border border-[#4a4a4a] bg-linear-to-b from-[#d0d0d0] to-[#fafafa] checked:from-[#a6a6a6] checked:to-[#e0e0e0]"
              />
              <svg viewBox="0 0 14 14" fill="none" stroke="#111" strokeWidth="1.5" className="pointer-events-none invisible col-start-1 row-start-1 size-[14px] peer-checked:visible">
                <path d="M4 7l2 3 5-7" />
              </svg>
            </span>
          </label>
        ))}
      </div>
      <div className="flex h-9 items-center justify-end border-t border-[#c6c6c6] pt-[2px] pr-[11px]">
        <button type="button" className="h-5 border border-[#b5b5b5] px-1 text-[12px] leading-4 text-[#777]">Finish Sketch</button>
      </div>
    </aside>
  );
}

function ViewCube() {
  return (
    <div className="absolute top-[20px] right-[26px]">
      <svg width="76" height="80" viewBox="0 0 76 80" fontFamily="Noto Sans" role="img" aria-label="View cube">
        <defs>
          <linearGradient id="face" x1="0" y1="0" x2="0" y2="1"><stop offset="0" stopColor="#f6f6f6" /><stop offset="1" stopColor="#d4d4d4" /></linearGradient>
          <radialGradient id="shadow"><stop offset="0" stopColor="#777" stopOpacity=".8" /><stop offset="1" stopColor="#777" stopOpacity="0" /></radialGradient>
        </defs>
        <ellipse cx="39" cy="71" rx="35" ry="5" fill="url(#shadow)" />
        <rect x="12.5" y="17.5" width="52" height="52" fill="url(#face)" stroke="#999" />
        <rect x="22" y="27" width="33" height="33" fill="#d7dbde" opacity=".7" />
        <text x="38.5" y="48" textAnchor="middle" fontFamily="Roboto" fontSize="12" fontWeight="700" fill="#8d9499">BACK</text>
        <g fontSize="14" fontWeight="500">
          <text x="56" y="14" fill="#8080ff">Z</text>
          <text x="0" y="70" fill="#f06a6a">X</text>
          <text x="64" y="77" fill="#6fdc6f">Y</text>
        </g>
      </svg>
    </div>
  );
}

const navTools = [
  { name: "Look at", art: <g stroke="#4a4a4a"><path d="M.5 5.5h15v10H.5z" fill="#f6f6f6" /><rect x="3.5" y="8.5" width="9" height="4" fill="#b5bcc4" /><path d="M2 4.5l5-3v2.500l5-3M3 4.5h9l1-4" /></g> },
  { name: "Pan", art: <path d="M5 15.5c-1-2-4-4-4.500-6 1-1 2.500 0 3.500 1.500L3 4c1-1.500 2-.5 2.500 1l1 3-.5-6c.5-1.500 2-1.500 2.500 0V8l1.500-5c1-1.500 2-.5 2 .5L11 9l2.500-4c1-1 2 0 1.500 1.500-1 3-2 6-3.500 9z" fill="#fff" stroke="#4a4a4a" /> },
  { name: "Zoom", art: <g><circle cx="5.5" cy="6.5" r="4.5" fill="#e4f1f4" stroke="#4a4a4a" /><path d="M9 10l4 4.500" stroke="#333" strokeWidth="3" /><path d="M11 3.500h5M13.500 1v5M11 7.500h5" stroke="#444" /></g> },
  { name: "Fit", caret: true, art: <g><rect x=".5" y=".5" width="15" height="15" stroke="#888" strokeDasharray="3 2" /><circle cx="7.5" cy="7" r="6" fill="#dff0ef" stroke="#555" /><path d="M11.5 11.5l4.500 4" stroke="#333" strokeWidth="3" /></g> },
  { name: "Display settings", caret: true, art: <g stroke="#555"><rect x=".5" y=".5" width="15" height="12" fill="#f0f0f0" /><rect x="2.5" y="2.5" width="11" height="8" fill="#9dbde6" stroke="#5578a8" /><path d="M6 13v2.500h5V13" /></g> },
  { name: "Grid and snaps", caret: true, art: <path d="M.5.5h15v15H.5zM3.500 0v16M6.500 0v16M9.500 0v16M12.500 0v16M0 3.500h16M0 6.500h16M0 9.500h16M0 12.500h16" stroke="#777" fill="#f8f8f8" /> },
  { name: "Viewports", caret: true, art: <g fill="#a9c6ea" stroke="#5a6f94"><rect x=".5" y="1.5" width="6" height="5" /><rect x="8.5" y="1.5" width="6" height="5" /><rect x=".5" y="8.5" width="6" height="5" /><rect x="8.5" y="8.5" width="6" height="5" /></g> },
];

function NavBar() {
  return (
    <div className="absolute bottom-1 left-1/2 flex h-6 w-[204px] -translate-x-1/2 items-center justify-between bg-[#f1f1f1] pr-1 pl-[3px]">
      {navTools.map((t) => (
        <button key={t.name} type="button" aria-label={t.name} className="flex items-center gap-[3px]">
          <svg width="16" height="16" viewBox="0 0 16 16" fill="none">{t.art}</svg>
          {t.caret && <Caret className="w-[6px] text-[#333]" />}
        </button>
      ))}
    </div>
  );
}

export default function App() {
  return (
    <div className="flex min-h-screen flex-col bg-white font-['Liberation_Sans',Arial,sans-serif]">
      <header>
        <TitleBar />
        <TabBar />
        <Ribbon />
      </header>
      <main className="relative min-h-[600px] flex-1 overflow-hidden">
        <ModelCanvas />
        <Browser />
        <LineTooltip />
        <ViewCube />
        <SketchPalette />
        <div className="absolute bottom-1 left-1 flex h-[25px] w-[300px] items-center border border-[#c4c4c4] bg-[#f1f1f1] pr-[2px] pl-6 font-['Roboto',sans-serif] text-[11px] leading-4 text-[#666]">
          <h2>COMMENTS</h2>
          <button type="button" aria-label="Expand comments" className="mr-[6px] ml-auto">
            <svg width="9" height="9" viewBox="0 0 9 9"><circle cx="4.5" cy="4.5" r="4.5" fill="#2b2b2b" /><path d="M2 4.5h5M4.5 2v5" stroke="#fff" strokeWidth="1.3" /></svg>
          </button>
          <svg width="3" height="11" viewBox="0 0 3 11" stroke="#777" aria-hidden="true"><path d="M.5 0v11M2.5 2v7" /></svg>
        </div>
        <NavBar />
        <button type="button" aria-label="Assistant" className="absolute right-[14px] bottom-[9px]">
          <svg width="14" height="14" viewBox="0 0 14 14"><path d="M7 .5A6.500 6.500 0 0 1 13.500 7v6.500H7A6.500 6.500 0 0 1 7 .5z" fill="#111" /><path d="M3 10c1-3 3-3 4-3 2 0 2 1.500 4 .5M4 5.500c2-1.500 4-1.500 6.500-1" stroke="#fff" strokeWidth="1.500" fill="none" /></svg>
        </button>
      </main>
      <footer className="h-1 bg-[#f0f0f0]" />
    </div>
  );
}
